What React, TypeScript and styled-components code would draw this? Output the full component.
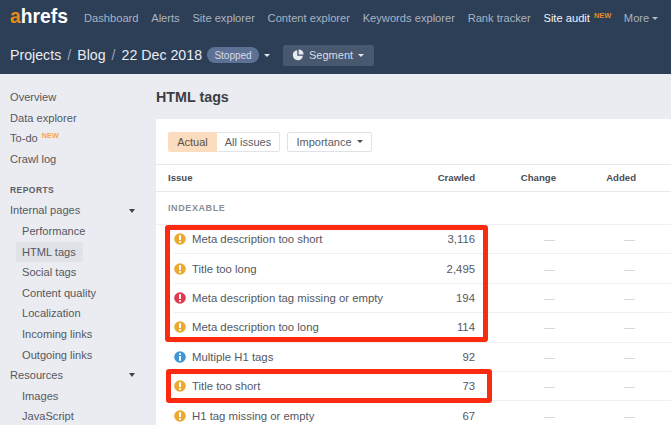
import React from "react";
import styled, { createGlobalStyle } from "styled-components";

const Global = createGlobalStyle`
  html, body { margin: 0; padding: 0; background: #ebecf1; }
  body { font-family: "Liberation Sans", Arial, sans-serif; }
  * { box-sizing: border-box; }
`;

const Page = styled.div`
  width: 671px;
  height: 425px;
  overflow: hidden;
  display: flex;
  flex-direction: column;
  position: relative;
`;

const Header = styled.header`
  height: 74px;
  flex: none;
  background: #2d3e57;
  display: flex;
  flex-direction: column;
  padding-left: 10px;
`;

const TopBar = styled.nav`
  height: 36px;
  display: flex;
  align-items: center;
  white-space: nowrap;
`;

const Logo = styled.div`
  width: 74px;
  font-size: 19.3px;
  font-weight: 700;
  color: #fff;
  line-height: 1;
  margin-top: -3px;
`;

const LogoA = styled.span`
  color: #e8891c;
`;

const NavItem = styled.span<{ $active?: boolean }>`
  font-size: 11.15px;
  color: ${(p) => (p.$active ? "#f2f3f5" : "#a9b3c1")};
  margin-right: 12.7px;
  display: inline-flex;
  align-items: center;
`;

const NewTag = styled.span<{ $side?: boolean }>`
  font-size: 7.4px;
  font-weight: 700;
  color: ${(p) => (p.$side ? "#f6a94a" : "#e68a2c")};
  margin-left: 4px;
  margin-top: -5px;
  line-height: 1;
`;

const Caret = styled.i<{ $color?: string; $size?: number }>`
  display: inline-block;
  width: 0;
  height: 0;
  border-left: ${(p) => p.$size ?? 3}px solid transparent;
  border-right: ${(p) => p.$size ?? 3}px solid transparent;
  border-top: ${(p) => (p.$size ?? 3) + 0.5}px solid ${(p) => p.$color ?? "#cfd4dc"};
`;

const CrumbBar = styled.div`
  height: 38px;
  display: flex;
  align-items: center;
  white-space: nowrap;
`;

const Crumb = styled.span`
  font-size: 14.2px;
  color: #e9ecf0;
`;

const Slash = styled.span`
  font-size: 14.2px;
  color: #98a3b3;
  margin: 0 6px;
`;

const Pill = styled.span`
  height: 16px;
  width: 52px;
  margin-left: 5px;
  margin-right: 5px;
  border-radius: 8px;
  background: #5d7196;
  color: #d5dbe5;
  font-size: 10px;
  display: inline-flex;
  align-items: center;
  justify-content: center;
`;

const SegmentButton = styled.button`
  height: 21px;
  width: 91px;
  margin-left: 13px;
  border: 0;
  border-radius: 2px;
  background: #47586f;
  color: #d8dde5;
  font: 11px "Liberation Sans", Arial, sans-serif;
  display: inline-flex;
  align-items: center;
  gap: 5px;
  padding: 0 0 0 9px;
`;

const Body = styled.div`
  flex: 1;
  display: flex;
  min-height: 0;
`;

const Sidebar = styled.aside`
  width: 156px;
  flex: none;
  padding-top: 13px;
  background: #ebecf1;
`;

const SideItem = styled.div<{ $sub?: boolean; $active?: boolean }>`
  height: 20.6px;
  font-size: 11.1px;
  line-height: 20.6px;
  color: #55585f;
  margin-left: ${(p) => (p.$sub ? "16px" : "0")};
  padding-left: ${(p) => (p.$sub ? "6px" : "10px")};
  padding-right: 20px;
  width: ${(p) => (p.$sub ? "67px" : "auto")};
  white-space: nowrap;
  display: flex;
  align-items: center;
  background: ${(p) => (p.$active ? "#e1e2e7" : "transparent")};
  border-radius: 2px;
`;

const SideGroup = styled(SideItem)`
  justify-content: space-between;
  padding-right: 21px;
`;

const SideHeading = styled.div`
  font-size: 8.5px;
  font-weight: 700;
  letter-spacing: 0.45px;
  color: #5b5e66;
  height: 20px;
  margin-top: 11px;
  padding-left: 10px;
  line-height: 20px;
`;

const Main = styled.main`
  flex: 1;
  min-width: 0;
`;

const Title = styled.h1`
  margin: 0;
  height: 45px;
  padding-top: 15px;
  font-size: 14.3px;
  line-height: 17px;
  font-weight: 700;
  color: #3a3e46;
`;

const Card = styled.section`
  background: #fff;
  height: 306px;
`;

const Filters = styled.div`
  height: 46px;
  display: flex;
  align-items: center;
  padding-left: 12px;
  border-bottom: 1px solid #e9eaee;
`;

const ToggleOn = styled.span`
  height: 20px;
  width: 49px;
  background: #fcdcbf;
  border-radius: 2px 0 0 2px;
  color: #5a5148;
  font-size: 11px;
  display: flex;
  align-items: center;
  justify-content: center;
`;

const ToggleOff = styled.span`
  height: 20px;
  width: 63px;
  background: #fff;
  border: 1px solid #e3e4e8;
  border-left: 0;
  border-radius: 0 2px 2px 0;
  color: #5a5d64;
  font-size: 11px;
  display: flex;
  align-items: center;
  justify-content: center;
`;

const Dropdown = styled.span`
  height: 20px;
  width: 85px;
  margin-left: 7px;
  background: #fff;
  border: 1px solid #e0e1e5;
  border-radius: 2px;
  color: #5a5d64;
  font-size: 11px;
  display: flex;
  align-items: center;
  justify-content: center;
  gap: 5px;
`;

const HeadRow = styled.div`
  height: 27px;
  display: flex;
  align-items: center;
  padding-left: 12px;
  padding-right: 35px;
  padding-bottom: 1px;
  font-size: 9.6px;
  font-weight: 700;
  color: #4a4d55;
  border-bottom: 1px solid #e9eaee;
`;

const IssueCol = styled.div`
  flex: 1;
  min-width: 0;
  display: flex;
  align-items: center;
  gap: 6px;
  white-space: nowrap;
`;

const NumCol = styled.div<{ $w: number; $faint?: boolean }>`
  width: ${(p) => p.$w}px;
  flex: none;
  text-align: right;
  color: ${(p) => (p.$faint ? "#cfd1d5" : "inherit")};
`;

const Section = styled.div`
  height: 33px;
  padding-left: 12px;
  display: flex;
  align-items: center;
  font-size: 9px;
  font-weight: 700;
  letter-spacing: 0.6px;
  color: #8b8e95;
  border-bottom: 1px solid #eeeff2;
`;

const Row = styled.div`
  height: 29.4px;
  margin-left: 18px;
  padding-right: 36px;
  display: flex;
  align-items: center;
  font-size: 11.35px;
  color: #55585f;
  border-bottom: 1px solid #eeeff2;
`;

const Highlight = styled.div<{ $x: number; $y: number; $w: number; $h: number }>`
  position: absolute;
  left: ${(p) => p.$x}px;
  top: ${(p) => p.$y}px;
  width: ${(p) => p.$w}px;
  height: ${(p) => p.$h}px;
  border: 5px solid #fb2a10;
  border-radius: 3px;
  pointer-events: none;
`;

type Level = "warn" | "error" | "info";
const levelColor: Record<Level, string> = { warn: "#eba92f", error: "#e2384d", info: "#3e96d9" };

function IssueIcon({ level }: { level: Level }) {
  return (
    <svg width="12" height="12" viewBox="0 0 12 12" style={{ flex: "none" }}>
      <circle cx="6" cy="6" r="5.8" fill={levelColor[level]} />
      {level === "info" ? (
        <>
          <rect x="5" y="2.2" width="2" height="1.8" fill="#fff" />
          <rect x="5" y="5" width="2" height="4.8" fill="#fff" />
        </>
      ) : (
        <>
          <rect x="5" y="2.2" width="2" height="4.8" fill="#fff" />
          <rect x="5" y="8" width="2" height="1.8" fill="#fff" />
        </>
      )}
    </svg>
  );
}

const rows: { level: Level; name: string; n: string }[] = [
  { level: "warn", name: "Meta description too short", n: "3,116" },
  { level: "warn", name: "Title too long", n: "2,495" },
  { level: "error", name: "Meta description tag missing or empty", n: "194" },
  { level: "warn", name: "Meta description too long", n: "114" },
  { level: "info", name: "Multiple H1 tags", n: "92" },
  { level: "warn", name: "Title too short", n: "73" },
  { level: "warn", name: "H1 tag missing or empty", n: "67" },
];

const navItems = ["Dashboard", "Alerts", "Site explorer", "Content explorer", "Keywords explorer", "Rank tracker"];

export default function App() {
  return (
    <Page>
      <Global />
      <Header>
        <TopBar>
          <Logo>
            <LogoA>a</LogoA>hrefs
          </Logo>
          {navItems.map((n) => (
            <NavItem key={n}>{n}</NavItem>
          ))}
          <NavItem $active>
            Site audit<NewTag>NEW</NewTag>
          </NavItem>
          <NavItem>
            More&nbsp;
            <Caret $color="#b5bdc9" />
          </NavItem>
        </TopBar>
        <CrumbBar>
          <Crumb>Projects</Crumb>
          <Slash>/</Slash>
          <Crumb>Blog</Crumb>
          <Slash>/</Slash>
          <Crumb>22 Dec 2018</Crumb>
          <Pill>Stopped</Pill>
          <Caret $color="#e3e6eb" />
          <SegmentButton>
            <svg width="12" height="12" viewBox="0 0 12 12">
              <path d="M5.3 1.2A5 5 0 1 0 10.8 6.7H5.3Z" fill="#e8ebef" />
              <path d="M6.6 0.4A5 5 0 0 1 11.6 5.4H6.6Z" fill="#e8ebef" />
            </svg>
            Segment
            <Caret $color="#e3e6eb" />
          </SegmentButton>
        </CrumbBar>
      </Header>
      <Body>
        <Sidebar>
          <SideItem>Overview</SideItem>
          <SideItem>Data explorer</SideItem>
          <SideItem>
            To-do<NewTag $side>NEW</NewTag>
          </SideItem>
          <SideItem>Crawl log</SideItem>
          <SideHeading>REPORTS</SideHeading>
          <SideGroup>
            Internal pages
            <Caret $color="#3f4248" $size={3.5} />
          </SideGroup>
          <SideItem $sub>Performance</SideItem>
          <SideItem $sub $active>
            HTML tags
          </SideItem>
          <SideItem $sub>Social tags</SideItem>
          <SideItem $sub>Content quality</SideItem>
          <SideItem $sub>Localization</SideItem>
          <SideItem $sub>Incoming links</SideItem>
          <SideItem $sub>Outgoing links</SideItem>
          <SideGroup>
            Resources
            <Caret $color="#3f4248" $size={3.5} />
          </SideGroup>
          <SideItem $sub>Images</SideItem>
          <SideItem $sub>JavaScript</SideItem>
        </Sidebar>
        <Main>
          <Title>HTML tags</Title>
          <Card>
            <Filters>
              <ToggleOn>Actual</ToggleOn>
              <ToggleOff>All issues</ToggleOff>
              <Dropdown>
                Importance
                <Caret $color="#4a4d55" />
              </Dropdown>
            </Filters>
            <HeadRow>
              <IssueCol>Issue</IssueCol>
              <NumCol $w={60}>Crawled</NumCol>
              <NumCol $w={81}>Change</NumCol>
              <NumCol $w={80}>Added</NumCol>
            </HeadRow>
            <Section>INDEXABLE</Section>
            {rows.map((r) => (
              <Row key={r.name}>
                <IssueCol>
                  <IssueIcon level={r.level} />
                  {r.name}
                </IssueCol>
                <NumCol $w={60}>{r.n}</NumCol>
                <NumCol $w={80} $faint>
                  —
                </NumCol>
                <NumCol $w={80} $faint>
                  —
                </NumCol>
              </Row>
            ))}
          </Card>
        </Main>
      </Body>
      <Highlight $x={165} $y={225} $w={323} $h={117} />
      <Highlight $x={166} $y={369} $w={326} $h={34} />
    </Page>
  );
}
